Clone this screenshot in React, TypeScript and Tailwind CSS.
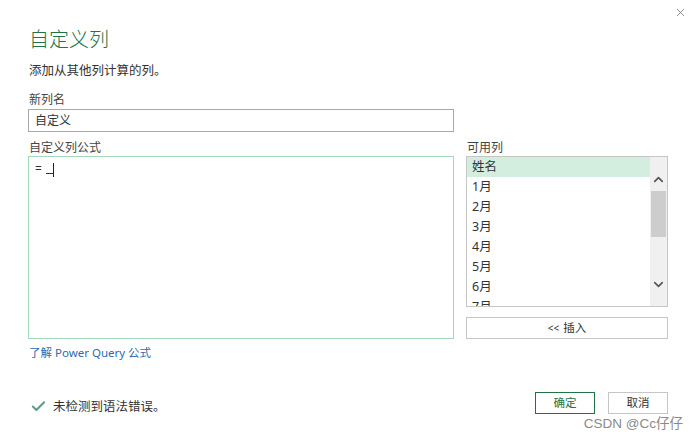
import { X, Check, ChevronUp, ChevronDown } from 'lucide-react';

const columns = ['姓名', '1月', '2月', '3月', '4月', '5月', '6月', '7月'];

export default function App() {
  return (
    <div
      className="relative w-[698px] h-[441px] bg-white text-[#333] overflow-hidden"
      style={{ fontFamily: '"Noto Sans", "Noto Sans CJK SC", sans-serif' }}
    >
      <button className="absolute top-[6px] right-[11px] text-[#666]">
        <X size={13} strokeWidth={1.3} />
      </button>

      <div className="flex flex-col pl-[28px] pt-[29px]">
        <h1 className="text-[20px] leading-[22px] font-light text-[#217346] pl-[1px]">自定义列</h1>
        <p className="mt-[12px] text-[12.5px] leading-[16px] pl-[1px]">添加从其他列计算的列。</p>

        <label className="mt-[13px] text-[12px] leading-[16px] pl-[1px] text-[#444]">新列名</label>
        <div className="mt-[1px] w-[426px] h-[23px] border border-[#a9a9a9] px-[6px] flex items-center text-[12px]">
          自定义
        </div>

        <div className="mt-[8px] flex gap-[12px]">
          <div className="flex flex-col w-[426px]">
            <span className="text-[12px] leading-[16px] pl-[1px] text-[#444]">自定义列公式</span>
            <div className="h-[183px] border border-[#a3d8ba] px-[6px] pt-[4px]">
              <div className="flex items-end text-[12px] leading-[16px]">
                <span>=&nbsp;</span>
                <span className="inline-block w-[7px] h-[1px] bg-[#333] mb-[3px] ml-[1px]" />
                <span className="inline-block w-[1px] h-[14px] bg-[#222]" />
              </div>
            </div>
          </div>

          <div className="flex flex-col w-[202px]">
            <span className="text-[12px] leading-[16px] pl-[1px] text-[#444]">可用列</span>
            <div className="h-[151px] border border-[#c6c6c6] flex overflow-hidden">
              <div className="flex-1 flex flex-col">
                {columns.map((c, i) => (
                  <div
                    key={c}
                    className={
                      i === 0
                        ? 'h-[20px] shrink-0 px-[5px] flex items-center text-[12.5px] bg-[#d3eddf]'
                        : 'h-[20px] shrink-0 px-[5px] flex items-center text-[12.5px]'
                    }
                  >
                    {c}
                  </div>
                ))}
              </div>
              <div className="w-[17px] bg-[#f0f0f0] flex flex-col items-center text-[#555]">
                <ChevronUp size={15} strokeWidth={2.6} className="mt-[15px]" />
                <div className="mt-[4px] w-[15px] h-[46px] bg-[#cdcdcd]" />
                <ChevronDown size={15} strokeWidth={2.6} className="mt-[40px]" />
              </div>
            </div>
            <button className="mt-[10px] h-[22px] border border-[#c6c6c6] bg-white text-[11.5px] leading-[16px] flex items-center justify-center gap-[4px]">
              <span className="text-[10px]">&lt;&lt;</span>
              <span>插入</span>
            </button>
          </div>
        </div>

        <a className="mt-[6px] text-[11.5px] leading-[16px] text-[#2b6cb0] pl-[1px] w-fit">了解 Power Query 公式</a>

        <div className="mt-[31px] flex items-start pr-[30px]">
          <div className="mt-[6px] flex items-center gap-[6px] pl-[2px]">
            <Check size={17} strokeWidth={2.8} className="text-[#5c9c80]" />
            <span className="text-[12.5px] leading-[16px]">未检测到语法错误。</span>
          </div>
          <div className="ml-auto flex gap-[13px]">
            <button className="w-[60px] h-[22px] border border-[#217346] text-[11.5px] text-[#217346]">确定</button>
            <button className="w-[60px] h-[22px] border border-[#c6c6c6] text-[11.5px]">取消</button>
          </div>
        </div>
      </div>

      <span
        className="absolute right-[15px] bottom-[9px] text-[13.5px] leading-[16px] text-[#8a8a8a]"
        style={{ fontFamily: '"Liberation Sans", "Noto Sans CJK SC", sans-serif' }}
      >
        CSDN @Cc仔仔
      </span>
    </div>
  );
}
